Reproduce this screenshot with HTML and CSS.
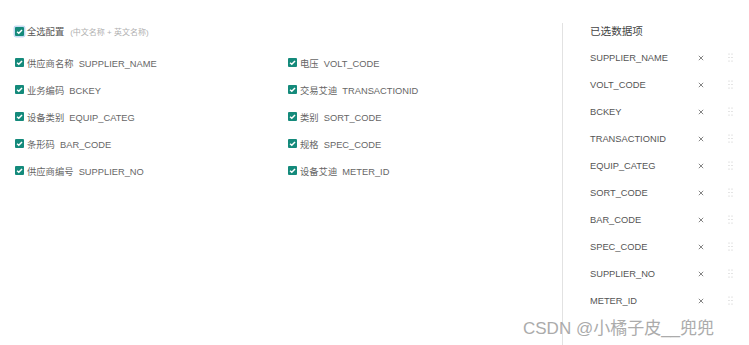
FILE: index.html
```html
<!DOCTYPE html>
<html lang="zh">
<head>
<meta charset="utf-8">
<link rel="stylesheet" href="styles.css">
</head>
<body>
<div class="page">
  <div class="left">
    <div class="header">
      <span class="cb focus"><svg viewBox="0 0 10 10"><path d="M2.3 5.2 L4.2 7 L7.8 3.2" /></svg></span>
      <span class="htitle">全选配置</span>
      <span class="hint">(中文名称 + 英文名称)</span>
    </div>
    <div class="grid">
      <div class="row"><span class="cb"><svg viewBox="0 0 10 10"><path d="M2.3 5.2 L4.2 7 L7.8 3.2" /></svg></span><span class="lbl">供应商名称&nbsp; SUPPLIER_NAME</span></div>
      <div class="row"><span class="cb"><svg viewBox="0 0 10 10"><path d="M2.3 5.2 L4.2 7 L7.8 3.2" /></svg></span><span class="lbl">电压&nbsp; VOLT_CODE</span></div>
      <div class="row"><span class="cb"><svg viewBox="0 0 10 10"><path d="M2.3 5.2 L4.2 7 L7.8 3.2" /></svg></span><span class="lbl">业务编码&nbsp; BCKEY</span></div>
      <div class="row"><span class="cb"><svg viewBox="0 0 10 10"><path d="M2.3 5.2 L4.2 7 L7.8 3.2" /></svg></span><span class="lbl">交易艾迪&nbsp; TRANSACTIONID</span></div>
      <div class="row"><span class="cb"><svg viewBox="0 0 10 10"><path d="M2.3 5.2 L4.2 7 L7.8 3.2" /></svg></span><span class="lbl">设备类别&nbsp; EQUIP_CATEG</span></div>
      <div class="row"><span class="cb"><svg viewBox="0 0 10 10"><path d="M2.3 5.2 L4.2 7 L7.8 3.2" /></svg></span><span class="lbl">类别&nbsp; SORT_CODE</span></div>
      <div class="row"><span class="cb"><svg viewBox="0 0 10 10"><path d="M2.3 5.2 L4.2 7 L7.8 3.2" /></svg></span><span class="lbl">条形码&nbsp; BAR_CODE</span></div>
      <div class="row"><span class="cb"><svg viewBox="0 0 10 10"><path d="M2.3 5.2 L4.2 7 L7.8 3.2" /></svg></span><span class="lbl">规格&nbsp; SPEC_CODE</span></div>
      <div class="row"><span class="cb"><svg viewBox="0 0 10 10"><path d="M2.3 5.2 L4.2 7 L7.8 3.2" /></svg></span><span class="lbl">供应商编号&nbsp; SUPPLIER_NO</span></div>
      <div class="row"><span class="cb"><svg viewBox="0 0 10 10"><path d="M2.3 5.2 L4.2 7 L7.8 3.2" /></svg></span><span class="lbl">设备艾迪&nbsp; METER_ID</span></div>
    </div>
  </div>
  <div class="right">
    <div class="rtitle">已选数据项</div>
    <ul class="list">
      <li class="item"><span class="name">SUPPLIER_NAME</span><span class="x"><svg viewBox="0 0 6 6"><path d="M0.8 0.8 L5.2 5.2 M5.2 0.8 L0.8 5.2"/></svg></span><span class="drag"><svg viewBox="0 0 5 9"><circle cx="1" cy="1" r="0.6"/><circle cx="4" cy="1" r="0.6"/><circle cx="1" cy="4.5" r="0.6"/><circle cx="4" cy="4.5" r="0.6"/><circle cx="1" cy="8" r="0.6"/><circle cx="4" cy="8" r="0.6"/></svg></span></li>
      <li class="item"><span class="name">VOLT_CODE</span><span class="x"><svg viewBox="0 0 6 6"><path d="M0.8 0.8 L5.2 5.2 M5.2 0.8 L0.8 5.2"/></svg></span><span class="drag"><svg viewBox="0 0 5 9"><circle cx="1" cy="1" r="0.6"/><circle cx="4" cy="1" r="0.6"/><circle cx="1" cy="4.5" r="0.6"/><circle cx="4" cy="4.5" r="0.6"/><circle cx="1" cy="8" r="0.6"/><circle cx="4" cy="8" r="0.6"/></svg></span></li>
      <li class="item"><span class="name">BCKEY</span><span class="x"><svg viewBox="0 0 6 6"><path d="M0.8 0.8 L5.2 5.2 M5.2 0.8 L0.8 5.2"/></svg></span><span class="drag"><svg viewBox="0 0 5 9"><circle cx="1" cy="1" r="0.6"/><circle cx="4" cy="1" r="0.6"/><circle cx="1" cy="4.5" r="0.6"/><circle cx="4" cy="4.5" r="0.6"/><circle cx="1" cy="8" r="0.6"/><circle cx="4" cy="8" r="0.6"/></svg></span></li>
      <li class="item"><span class="name">TRANSACTIONID</span><span class="x"><svg viewBox="0 0 6 6"><path d="M0.8 0.8 L5.2 5.2 M5.2 0.8 L0.8 5.2"/></svg></span><span class="drag"><svg viewBox="0 0 5 9"><circle cx="1" cy="1" r="0.6"/><circle cx="4" cy="1" r="0.6"/><circle cx="1" cy="4.5" r="0.6"/><circle cx="4" cy="4.5" r="0.6"/><circle cx="1" cy="8" r="0.6"/><circle cx="4" cy="8" r="0.6"/></svg></span></li>
      <li class="item"><span class="name">EQUIP_CATEG</span><span class="x"><svg viewBox="0 0 6 6"><path d="M0.8 0.8 L5.2 5.2 M5.2 0.8 L0.8 5.2"/></svg></span><span class="drag"><svg viewBox="0 0 5 9"><circle cx="1" cy="1" r="0.6"/><circle cx="4" cy="1" r="0.6"/><circle cx="1" cy="4.5" r="0.6"/><circle cx="4" cy="4.5" r="0.6"/><circle cx="1" cy="8" r="0.6"/><circle cx="4" cy="8" r="0.6"/></svg></span></li>
      <li class="item"><span class="name">SORT_CODE</span><span class="x"><svg viewBox="0 0 6 6"><path d="M0.8 0.8 L5.2 5.2 M5.2 0.8 L0.8 5.2"/></svg></span><span class="drag"><svg viewBox="0 0 5 9"><circle cx="1" cy="1" r="0.6"/><circle cx="4" cy="1" r="0.6"/><circle cx="1" cy="4.5" r="0.6"/><circle cx="4" cy="4.5" r="0.6"/><circle cx="1" cy="8" r="0.6"/><circle cx="4" cy="8" r="0.6"/></svg></span></li>
      <li class="item"><span class="name">BAR_CODE</span><span class="x"><svg viewBox="0 0 6 6"><path d="M0.8 0.8 L5.2 5.2 M5.2 0.8 L0.8 5.2"/></svg></span><span class="drag"><svg viewBox="0 0 5 9"><circle cx="1" cy="1" r="0.6"/><circle cx="4" cy="1" r="0.6"/><circle cx="1" cy="4.5" r="0.6"/><circle cx="4" cy="4.5" r="0.6"/><circle cx="1" cy="8" r="0.6"/><circle cx="4" cy="8" r="0.6"/></svg></span></li>
      <li class="item"><span class="name">SPEC_CODE</span><span class="x"><svg viewBox="0 0 6 6"><path d="M0.8 0.8 L5.2 5.2 M5.2 0.8 L0.8 5.2"/></svg></span><span class="drag"><svg viewBox="0 0 5 9"><circle cx="1" cy="1" r="0.6"/><circle cx="4" cy="1" r="0.6"/><circle cx="1" cy="4.5" r="0.6"/><circle cx="4" cy="4.5" r="0.6"/><circle cx="1" cy="8" r="0.6"/><circle cx="4" cy="8" r="0.6"/></svg></span></li>
      <li class="item"><span class="name">SUPPLIER_NO</span><span class="x"><svg viewBox="0 0 6 6"><path d="M0.8 0.8 L5.2 5.2 M5.2 0.8 L0.8 5.2"/></svg></span><span class="drag"><svg viewBox="0 0 5 9"><circle cx="1" cy="1" r="0.6"/><circle cx="4" cy="1" r="0.6"/><circle cx="1" cy="4.5" r="0.6"/><circle cx="4" cy="4.5" r="0.6"/><circle cx="1" cy="8" r="0.6"/><circle cx="4" cy="8" r="0.6"/></svg></span></li>
      <li class="item"><span class="name">METER_ID</span><span class="x"><svg viewBox="0 0 6 6"><path d="M0.8 0.8 L5.2 5.2 M5.2 0.8 L0.8 5.2"/></svg></span><span class="drag"><svg viewBox="0 0 5 9"><circle cx="1" cy="1" r="0.6"/><circle cx="4" cy="1" r="0.6"/><circle cx="1" cy="4.5" r="0.6"/><circle cx="4" cy="4.5" r="0.6"/><circle cx="1" cy="8" r="0.6"/><circle cx="4" cy="8" r="0.6"/></svg></span></li>
    </ul>
  </div>
</div>
<div class="watermark">CSDN @小橘子皮__兜兜</div>
</body>
</html>
```

FILE: styles.css
```css
html, body {
  margin: 0;
  padding: 0;
  background: #fff;
}
body {
  font-family: "Liberation Sans", "Noto Sans CJK SC", sans-serif;
  width: 749px;
  height: 345px;
  overflow: hidden;
  position: relative;
}
.page {
  display: flex;
  height: 345px;
}
.left {
  width: 562px;
  flex-shrink: 0;
  padding: 22px 0 0 15px;
  box-sizing: border-box;
}
.header {
  display: flex;
  align-items: center;
  height: 18px;
  margin-bottom: 9px;
}
.cb {
  width: 9px;
  height: 9px;
  background: #148a7b;
  border-radius: 1px;
  display: inline-flex;
  flex-shrink: 0;
}
.cb svg {
  width: 9px;
  height: 9px;
  fill: none;
  stroke: #fff;
  stroke-width: 1.6;
}
.cb.focus {
  box-shadow: 0 0 0 1.5px #c6dcf3;
}
.htitle {
  font-size: 9.3px;
  color: #555;
  margin-left: 3px;
}
.hint {
  font-size: 8px;
  color: #b0b0b0;
  margin-left: 6px;
}
.grid {
  display: grid;
  grid-template-columns: 273px 1fr;
  grid-auto-rows: 27px;
}
.row {
  display: flex;
  align-items: center;
}
.lbl {
  font-size: 9.3px;
  color: #666;
  margin-left: 3px;
  white-space: nowrap;
}
.right {
  width: 187px;
  flex-shrink: 0;
  margin-top: 23px;
  border-left: 1px solid #e2e2e2;
  padding-left: 27px;
  box-sizing: border-box;
}
.rtitle {
  font-size: 10.6px;
  color: #444;
  height: 16px;
  line-height: 16px;
  margin-bottom: 5px;
}
.list {
  list-style: none;
  margin: 0;
  padding: 0;
}
.item {
  display: flex;
  align-items: center;
  height: 27px;
}
.name {
  width: 108px;
  flex-shrink: 0;
  font-size: 9.3px;
  color: #555;
  white-space: nowrap;
}
.x {
  width: 6px;
  height: 6px;
  display: inline-flex;
}
.x svg {
  width: 6px;
  height: 6px;
  stroke: #777;
  stroke-width: 0.9;
  fill: none;
}
.drag {
  margin-left: 24px;
  width: 5px;
  height: 9px;
  display: inline-flex;
}
.drag svg {
  width: 5px;
  height: 9px;
  fill: #c4c4c4;
}
.watermark {
  position: absolute;
  left: 523px;
  top: 314px;
  font-size: 17px;
  color: #ababab;
  white-space: nowrap;
  text-shadow: 0 0 1px #fff;
}
```
